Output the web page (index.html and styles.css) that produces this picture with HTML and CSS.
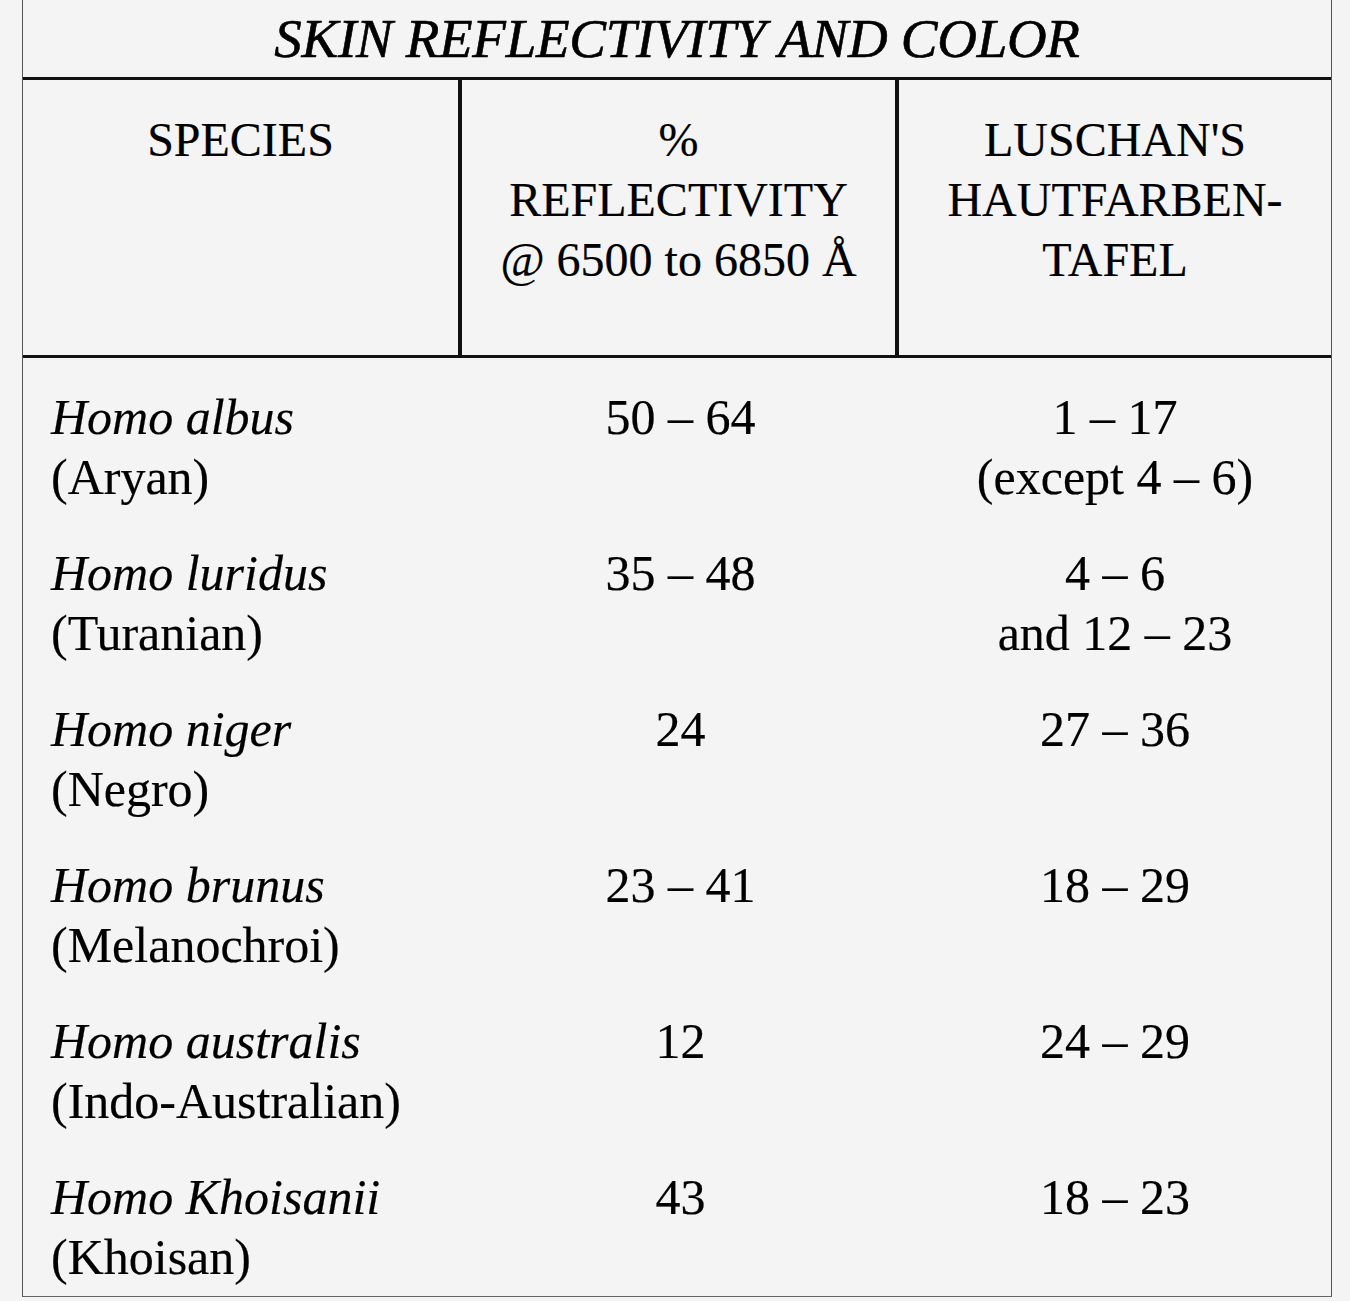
FILE: index.html
```html
<!DOCTYPE html>
<html lang="en">
<head>
<meta charset="utf-8">
<title>Skin Reflectivity and Color</title>
<link rel="stylesheet" href="styles.css">
</head>
<body>
<div class="sheet">
  <div class="title">SKIN REFLECTIVITY AND COLOR</div>
  <div class="head">
    <div class="hcell">SPECIES</div>
    <div class="hcell">%<br>REFLECTIVITY<br>@ 6500 to 6850 Å</div>
    <div class="hcell last">LUSCHAN'S<br>HAUTFARBEN-<br>TAFEL</div>
  </div>
  <div class="rows">
    <div class="row">
      <div class="sp"><i>Homo albus</i><br>(Aryan)</div>
      <div class="val">50 – 64</div>
      <div class="val">1 – 17<br>(except 4 – 6)</div>
    </div>
    <div class="row">
      <div class="sp"><i>Homo luridus</i><br>(Turanian)</div>
      <div class="val">35 – 48</div>
      <div class="val">4 – 6<br>and 12 – 23</div>
    </div>
    <div class="row">
      <div class="sp"><i>Homo niger</i><br>(Negro)</div>
      <div class="val">24</div>
      <div class="val">27 – 36</div>
    </div>
    <div class="row">
      <div class="sp"><i>Homo brunus</i><br>(Melanochroi)</div>
      <div class="val">23 – 41</div>
      <div class="val">18 – 29</div>
    </div>
    <div class="row">
      <div class="sp"><i>Homo australis</i><br>(Indo-Australian)</div>
      <div class="val">12</div>
      <div class="val">24 – 29</div>
    </div>
    <div class="row">
      <div class="sp"><i>Homo Khoisanii</i><br>(Khoisan)</div>
      <div class="val">43</div>
      <div class="val">18 – 23</div>
    </div>
  </div>
</div>
</body>
</html>
```

FILE: styles.css
```css
html, body {
  margin: 0;
  padding: 0;
  background: #f4f4f4;
}

body {
  font-family: "Liberation Serif", "Times New Roman", serif;
  color: #000;
  width: 1350px;
  height: 1301px;
  overflow: hidden;
  -webkit-text-stroke: 0.2px #000;
}

.sheet {
  box-sizing: border-box;
  margin-left: 22px;
  width: 1310px;
  border-left: 1px solid #555;
  border-right: 1px solid #555;
  border-bottom: 1px solid #666;
}

.title {
  height: 77px;
  line-height: 77px;
  text-align: center;
  font-style: italic;
  font-size: 55px;
  letter-spacing: -0.3px;
  border-bottom: 3px solid #111;
  -webkit-text-stroke: 0.6px #000;
}

.head {
  display: grid;
  grid-template-columns: 439px 437px 1fr;
  height: 278px;
  box-sizing: border-box;
  border-bottom: 3px solid #111;
}

.hcell {
  box-sizing: border-box;
  padding-top: 30px;
  font-size: 48px;
  line-height: 60px;
  text-align: center;
  border-right: 4px solid #111;
}

.hcell.last {
  border-right: none;
}

.rows {
  display: flex;
  flex-direction: column;
  gap: 36px;
  padding: 29px 0 9px;
}

.row {
  display: grid;
  grid-template-columns: 439px 437px 1fr;
  font-size: 50px;
  line-height: 60px;
  height: 120px;
}

.sp {
  padding-left: 28px;
}

.val {
  text-align: center;
}
```
